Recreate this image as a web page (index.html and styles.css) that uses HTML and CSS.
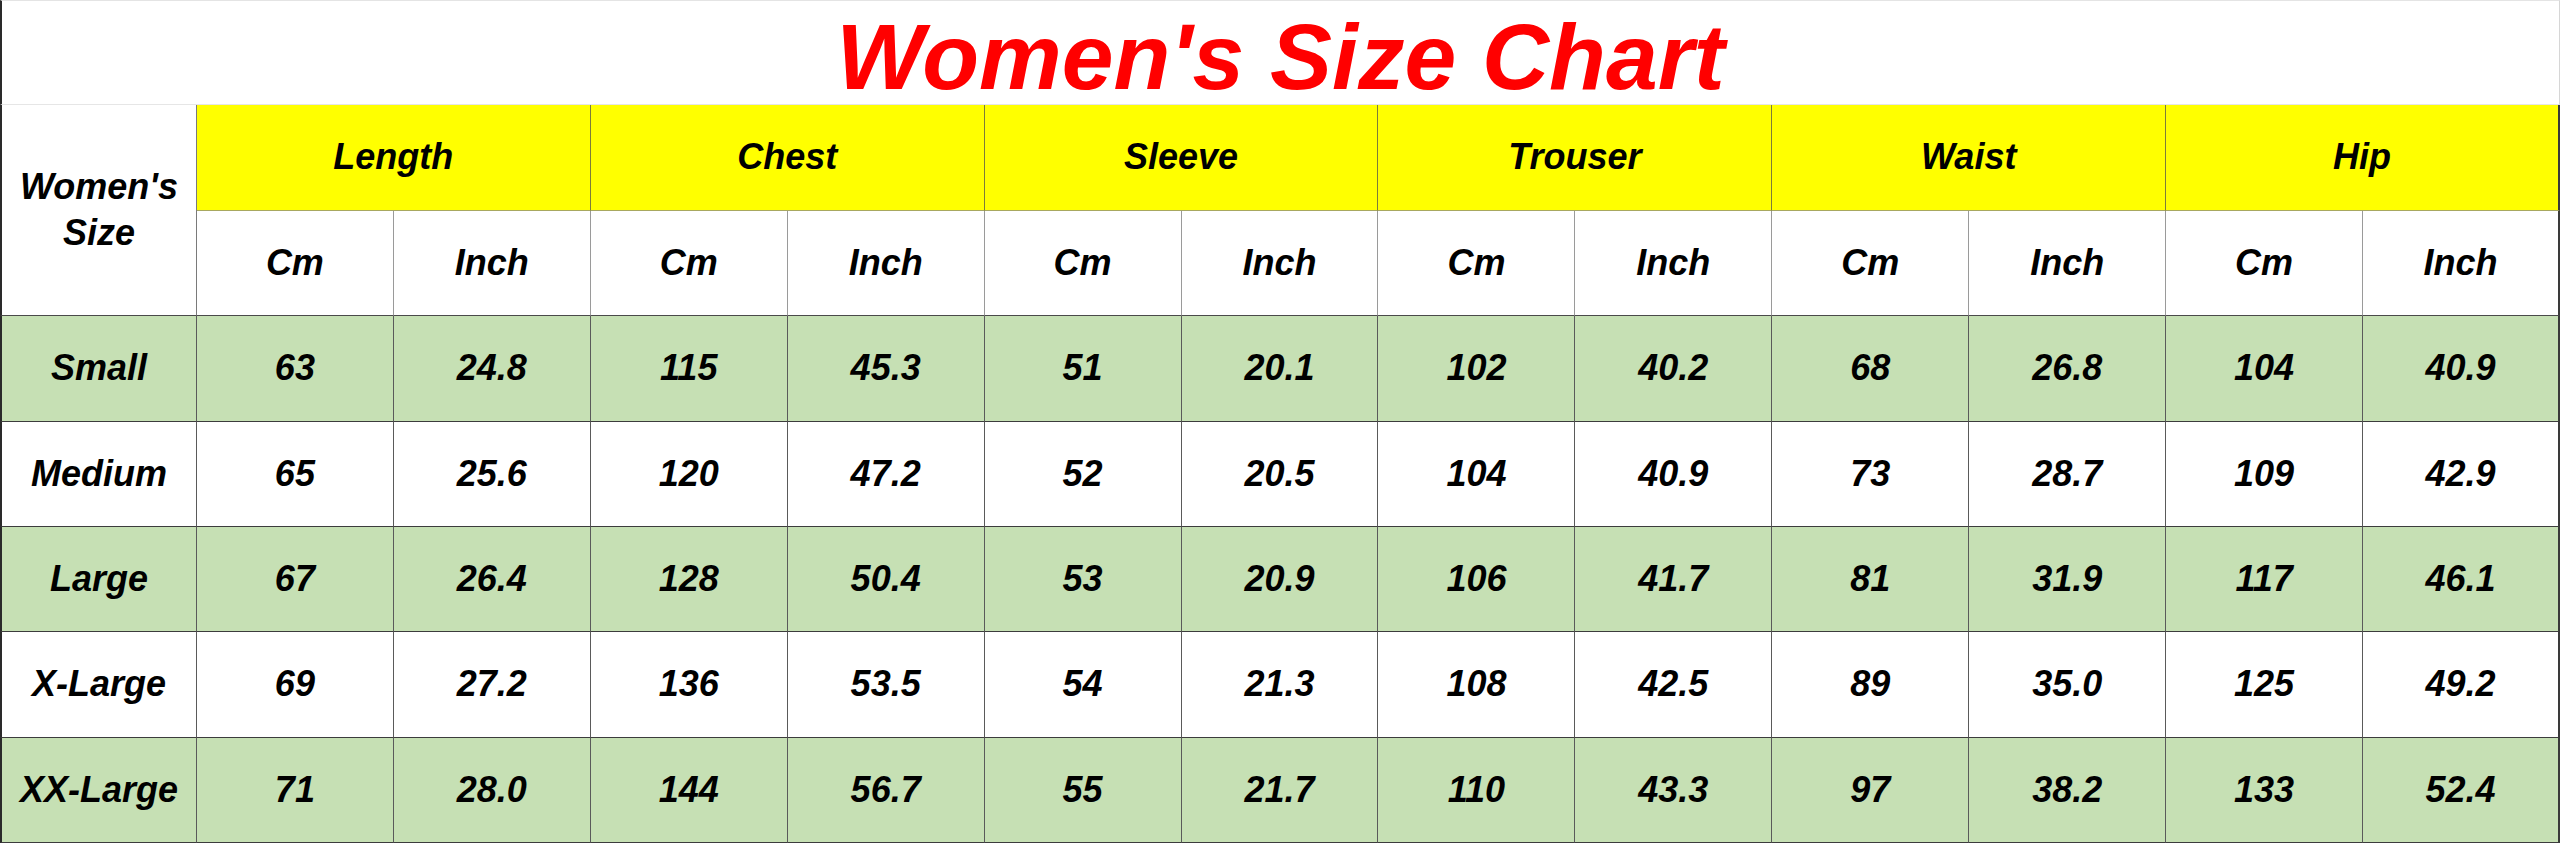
FILE: index.html
```html
<!DOCTYPE html>
<html lang="en">
<head>
<meta charset="utf-8">
<title>Women's Size Chart</title>
<link rel="stylesheet" href="styles.css">
</head>
<body>
<div class="chart">
  <div class="title">Women's Size Chart</div>

  <div class="cell size-head">Women's<br>Size</div>
  <div class="cell group">Length</div>
  <div class="cell group">Chest</div>
  <div class="cell group">Sleeve</div>
  <div class="cell group">Trouser</div>
  <div class="cell group">Waist</div>
  <div class="cell group last">Hip</div>

  <div class="cell unit">Cm</div><div class="cell unit">Inch</div>
  <div class="cell unit">Cm</div><div class="cell unit">Inch</div>
  <div class="cell unit">Cm</div><div class="cell unit">Inch</div>
  <div class="cell unit">Cm</div><div class="cell unit">Inch</div>
  <div class="cell unit">Cm</div><div class="cell unit">Inch</div>
  <div class="cell unit">Cm</div><div class="cell unit last">Inch</div>

  <div class="row green">
    <div class="cell name">Small</div>
    <div class="cell">63</div><div class="cell">24.8</div>
    <div class="cell">115</div><div class="cell">45.3</div>
    <div class="cell">51</div><div class="cell">20.1</div>
    <div class="cell">102</div><div class="cell">40.2</div>
    <div class="cell">68</div><div class="cell">26.8</div>
    <div class="cell">104</div><div class="cell last">40.9</div>
  </div>
  <div class="row">
    <div class="cell name">Medium</div>
    <div class="cell">65</div><div class="cell">25.6</div>
    <div class="cell">120</div><div class="cell">47.2</div>
    <div class="cell">52</div><div class="cell">20.5</div>
    <div class="cell">104</div><div class="cell">40.9</div>
    <div class="cell">73</div><div class="cell">28.7</div>
    <div class="cell">109</div><div class="cell last">42.9</div>
  </div>
  <div class="row green">
    <div class="cell name">Large</div>
    <div class="cell">67</div><div class="cell">26.4</div>
    <div class="cell">128</div><div class="cell">50.4</div>
    <div class="cell">53</div><div class="cell">20.9</div>
    <div class="cell">106</div><div class="cell">41.7</div>
    <div class="cell">81</div><div class="cell">31.9</div>
    <div class="cell">117</div><div class="cell last">46.1</div>
  </div>
  <div class="row">
    <div class="cell name">X-Large</div>
    <div class="cell">69</div><div class="cell">27.2</div>
    <div class="cell">136</div><div class="cell">53.5</div>
    <div class="cell">54</div><div class="cell">21.3</div>
    <div class="cell">108</div><div class="cell">42.5</div>
    <div class="cell">89</div><div class="cell">35.0</div>
    <div class="cell">125</div><div class="cell last">49.2</div>
  </div>
  <div class="row green">
    <div class="cell name">XX-Large</div>
    <div class="cell">71</div><div class="cell">28.0</div>
    <div class="cell">144</div><div class="cell">56.7</div>
    <div class="cell">55</div><div class="cell">21.7</div>
    <div class="cell">110</div><div class="cell">43.3</div>
    <div class="cell">97</div><div class="cell">38.2</div>
    <div class="cell">133</div><div class="cell last">52.4</div>
  </div>
</div>
</body>
</html>
```

FILE: styles.css
```css
* {
  box-sizing: border-box;
}

html, body {
  margin: 0;
  padding: 0;
  background: #ffffff;
}

.chart {
  width: 2560px;
  height: 843px;
  display: grid;
  grid-template-columns: repeat(13, 1fr);
  grid-template-rows: repeat(8, 1fr);
  font-family: "Liberation Sans", Arial, sans-serif;
  font-weight: 700;
  font-style: italic;
  color: #000000;
  background: #ffffff;
}

.title {
  grid-column: 1 / -1;
  display: flex;
  align-items: center;
  justify-content: center;
  padding-top: 10px;
  font-size: 93px;
  line-height: 93px;
  color: #ff0000;
  border-top: 1px solid #e4e4e4;
  border-left: 2px solid #2a2a2a;
  border-right: 1px solid #d6d6d6;
  border-bottom: 1px solid #e6e6e6;
}

.row {
  display: contents;
}

.cell {
  display: flex;
  align-items: center;
  justify-content: center;
  text-align: center;
  font-size: 36px;
  line-height: 1.117;
  background: #ffffff;
  border-right: 1px solid #5a5a5a;
  border-bottom: 1px solid #3c3c3c;
}

.green .cell {
  background: #c6e0b4;
}

.size-head {
  grid-row: span 2;
  line-height: 46px;
  border-left: 2px solid #2a2a2a;
  border-right: 1px solid #7a7a7a;
  border-bottom: 1px solid #4a4a4a;
}

.name {
  border-left: 2px solid #2a2a2a;
}

.group {
  grid-column: span 2;
  background: #ffff00;
  border-right: 1px solid #7c7c3a;
  border-bottom: 1px solid #a8a860;
}

.unit {
  border-right: 1px solid #9a9a9a;
  border-bottom: 1px solid #4a4a4a;
}

.cell.last {
  border-right: 2px solid #3a3a3a;
}
```
